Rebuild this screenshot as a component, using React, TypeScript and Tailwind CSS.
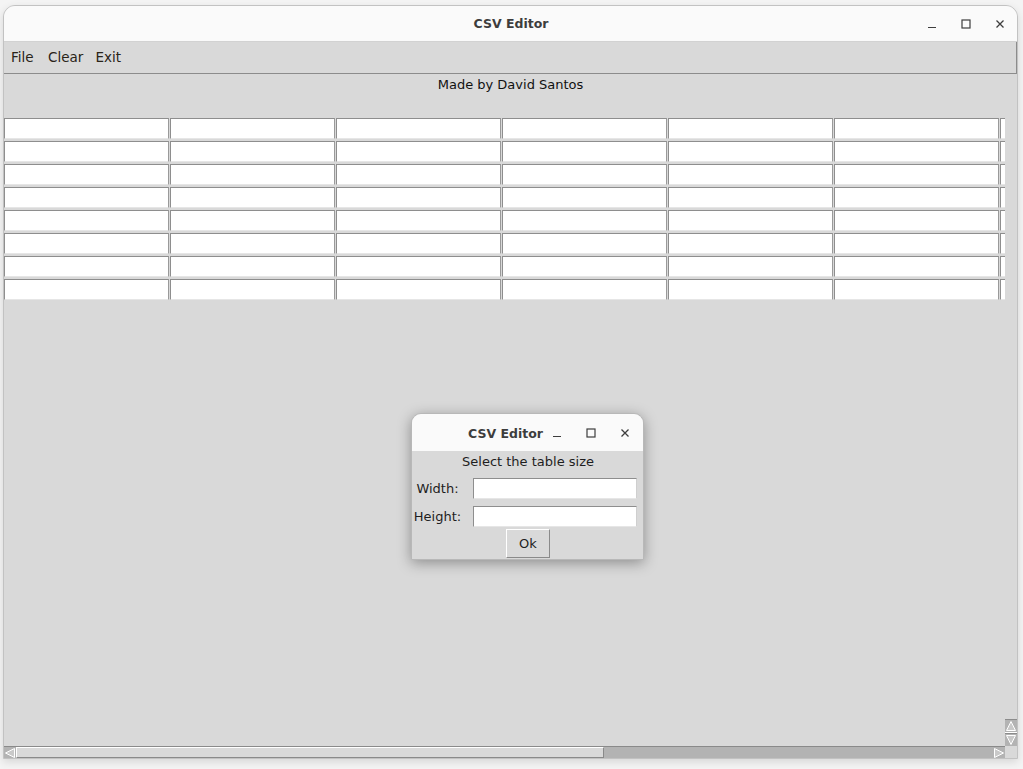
import React from 'react';

const ROWS = 8;
const COLS = 7;

function MinIcon() {
  return (
    <svg width="10" height="10" viewBox="0 0 10 10">
      <path d="M1 8.5h8" stroke="#3d3d3d" strokeWidth="1.2" />
    </svg>
  );
}

function MaxIcon() {
  return (
    <svg width="10" height="10" viewBox="0 0 10 10">
      <rect x="1" y="1" width="8" height="8" fill="none" stroke="#3d3d3d" strokeWidth="1.2" />
    </svg>
  );
}

function CloseIcon() {
  return (
    <svg width="10" height="10" viewBox="0 0 10 10">
      <path d="M1.5 1.5l7 7M8.5 1.5l-7 7" stroke="#3d3d3d" strokeWidth="1.3" />
    </svg>
  );
}

function WinButtons() {
  return (
    <div className="flex items-center">
      <div className="w-[34px] flex justify-center"><MinIcon /></div>
      <div className="w-[34px] flex justify-center"><MaxIcon /></div>
      <div className="w-[34px] flex justify-center"><CloseIcon /></div>
    </div>
  );
}

// tk style scrollbar arrow, dir = l | r | u | d
function Arrow({ dir }: { dir: 'l' | 'r' | 'u' | 'd' }) {
  const pts: Record<string, string> = {
    l: '1.5,6 10.5,1.5 10.5,10.5',
    r: '10.5,6 1.5,1.5 1.5,10.5',
    u: '6,1.5 1.5,10.5 10.5,10.5',
    d: '6,10.5 1.5,1.5 10.5,1.5',
  };
  return (
    <svg width="12" height="12" viewBox="0 0 12 12" className="block">
      <rect x="0" y="0" width="12" height="12" fill="#b3b3b3" />
      <polygon points={pts[dir]} fill="#c9c9c9" stroke="#ffffff" strokeWidth="1" />
    </svg>
  );
}

function Cell() {
  return (
    <div className="shrink-0 w-[165px] h-[21px] bg-white border-t border-l border-[#8e8e8e] border-r-[#9a9a9a] border-b border-b-[#e6e6e6] border-r" />
  );
}

function Field() {
  return (
    <div className="ml-[11px] w-[164px] h-[21px] bg-white border-t border-l border-[#8e8e8e] border-b border-r border-b-[#e6e6e6] border-r-[#cfcfcf]" />
  );
}

export default function App() {
  return (
    <div className="relative w-[1023px] h-[769px] overflow-hidden bg-[#f4f4f4] font-['DejaVu_Sans',sans-serif] text-[13px] text-[#1e1e1e]">
      <div className="pl-[3px] pt-[5px]">
        <div className="w-[1015px] h-[754px] flex flex-col rounded-t-[12px] border border-[#c2c2c2] bg-[#d9d9d9] overflow-hidden shadow-[0_3px_8px_rgba(0,0,0,0.12)]">
          {/* title bar */}
          <div className="h-[36px] shrink-0 grid grid-cols-[1fr_auto_1fr] items-center bg-[#fafafa] border-b border-[#d2d2d2]">
            <div />
            <div className="font-bold text-[12.5px] text-[#3d3d3d] pl-[1px] pt-[2px]">CSV Editor</div>
            <div className="flex justify-end">
              <WinButtons />
            </div>
          </div>
          {/* menu bar */}
          <div className="h-[32px] shrink-0 flex items-center border-b border-[#8c8c8c] border-r border-r-[#8c8c8c] text-[13.5px] text-[#2a2418]">
            <span className="pl-[7px] pr-[7.5px]">File</span>
            <span className="pl-[7px] pr-[5px]">Clear</span>
            <span className="px-[7px]">Exit</span>
          </div>
          {/* content */}
          <div className="flex-1 flex flex-col min-h-0">
            <div className="h-[22px] shrink-0 leading-[22px] text-center text-[#111]">Made by David Santos</div>
            <div className="flex-1 flex min-h-0">
              <div className="w-[1001px] flex flex-col overflow-hidden">
                <div className="mt-[22px] flex flex-col gap-[2px]">
                  {Array.from({ length: ROWS }).map((_, r) => (
                    <div key={r} className="flex gap-[1px]">
                      {Array.from({ length: COLS }).map((_, c) => (
                        <Cell key={c} />
                      ))}
                    </div>
                  ))}
                </div>
              </div>
              <div className="w-[12px] flex flex-col justify-end">
                <div className="flex flex-col border-t border-[#8c8c8c]">
                  <Arrow dir="u" />
                  <div className="h-[1px] bg-[#ffffff]" />
                  <div className="h-[1px] bg-[#8c8c8c]" />
                  <Arrow dir="d" />
                </div>
              </div>
            </div>
          </div>
          {/* horizontal scrollbar */}
          <div className="h-[12px] shrink-0 flex">
            <div className="w-[1001px] flex border-t border-[#8a8a8a] bg-[#b3b3b3]">
              <Arrow dir="l" />
              <div className="w-[588px] bg-[#d9d9d9] border-t border-l border-white border-b border-r border-b-[#8a8a8a] border-r-[#8a8a8a]" />
              <div className="flex-1" />
              <Arrow dir="r" />
            </div>
            <div className="w-[12px] bg-[#d9d9d9]" />
          </div>
        </div>
      </div>

      {/* dialog */}
      <div className="absolute left-[411px] top-[413px] w-[233px] h-[147px] flex flex-col rounded-t-[10px] border border-[#b8b8b8] bg-[#d9d9d9] overflow-hidden shadow-[0_3px_14px_rgba(0,0,0,0.35)]">
        <div className="h-[37px] shrink-0 flex items-center bg-[#fafafa]">
          <span className="ml-[56px] w-[81px] pt-[3px] font-bold text-[12.5px] text-[#3d3d3d]">CSV Editor</span>
          <div className="flex items-center -ml-[9px]">
            <div className="w-[34px] flex justify-center"><MinIcon /></div>
            <div className="w-[34px] flex justify-center"><MaxIcon /></div>
            <div className="w-[34px] flex justify-center"><CloseIcon /></div>
          </div>
        </div>
        <div className="flex flex-col pl-[1px]">
          <div className="h-[22px] leading-[22px] text-center">Select the table size</div>
          <div className="mt-[5px] flex items-center">
            <div className="w-[49px] text-center">Width:</div>
            <Field />
          </div>
          <div className="mt-[7px] flex items-center">
            <div className="w-[49px] text-center">Height:</div>
            <Field />
          </div>
          <div className="mt-[2px] flex justify-center">
            <div className="w-[44px] h-[29px] flex items-center justify-center bg-[#d9d9d9] border-t border-l border-white border-b border-r border-b-[#8a8a8a] border-r-[#8a8a8a]">Ok</div>
          </div>
        </div>
      </div>
    </div>
  );
}
